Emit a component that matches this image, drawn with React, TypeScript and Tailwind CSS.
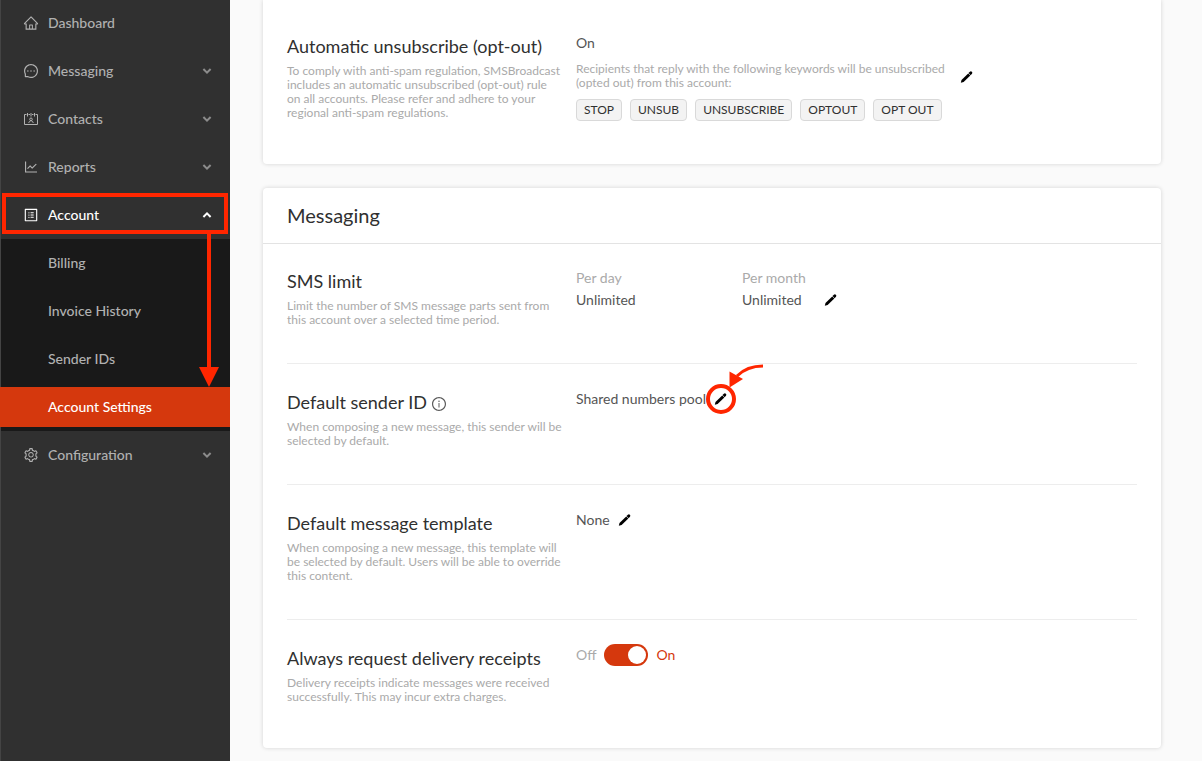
import type { ReactNode } from "react";
import {
  AiOutlineHome,
  AiOutlineInfoCircle,
  AiOutlineLineChart,
  AiOutlineMessage,
  AiOutlineProfile,
  AiOutlineSetting,
} from "react-icons/ai";

const accountPages = ["Billing", "Invoice History", "Sender IDs", "Account Settings"];
const keywords = ["STOP", "UNSUB", "UNSUBSCRIBE", "OPTOUT", "OPT OUT"];

function ContactsIcon() {
  return (
    <svg width="16" height="16" viewBox="0 0 16 16" fill="none" stroke="currentColor">
      <path d="M3.500 3.500h-2v10h13v-10h-2M5.500 3.500h1.500M9 3.500h1.500" />
      <path d="M4.500 2v3.500M8 2v3.500M11.500 2v3.500" />
      <circle cx="8" cy="8.300" r="1.300" />
      <path d="M5.800 12c.2-1.400 1-2.200 2.200-2.200s2 .8 2.200 2.200" />
    </svg>
  );
}

function Chevron(props: { up?: boolean }) {
  return (
    <svg
      className={props.up ? "ml-auto" : "ml-auto text-[#8c8c8c]"}
      width="10"
      height="8"
      viewBox="0 0 10 8"
      fill="none"
      stroke="currentColor"
      strokeWidth="2"
    >
      <path d={props.up ? "M1.4 6 5 2.400 8.600 6" : "M1.400 2 5 5.600 8.600 2"} />
    </svg>
  );
}

function MenuItem(props: { icon: ReactNode; label: string; open?: boolean; plain?: boolean; children?: ReactNode }) {
  return (
    <div className={props.open ? "relative text-white" : "relative text-[#b1b1b1]"}>
      <button type="button" className="flex h-10 w-full items-center pr-[18px] pl-[22px] text-left">
        <span className="mr-[9px] shrink-0">{props.icon}</span>
        {props.label}
        {props.plain ? null : <Chevron up={props.open} />}
      </button>
      {props.children}
    </div>
  );
}

function AccountHighlight() {
  return (
    <>
      <div className="pointer-events-none absolute -top-[2px] right-[2px] left-[1px] h-[41px] border-4 border-[#ff2600]" />
      <svg className="pointer-events-none absolute top-[39px] right-[11px]" width="20" height="153" viewBox="0 0 20 153" fill="#ff2600">
        <path d="M8 0h4v133h8l-10 20L0 133h8z" />
      </svg>
    </>
  );
}

function Sidebar() {
  return (
    <nav className="w-[230px] shrink-0 border-l border-[#444] bg-[#303030] pt-[3px] text-sm font-medium">
      <div className="flex flex-col gap-2">
        <MenuItem icon={<AiOutlineHome size={16} />} label="Dashboard" plain />
        <MenuItem icon={<AiOutlineMessage size={16} />} label="Messaging" />
        <MenuItem icon={<ContactsIcon />} label="Contacts" />
        <MenuItem icon={<AiOutlineLineChart size={16} />} label="Reports" />
        <div className="relative z-10">
          <MenuItem icon={<AiOutlineProfile size={16} />} label="Account" open>
            <AccountHighlight />
          </MenuItem>
        </div>
      </div>
      <ul className="my-1 flex flex-col gap-2 bg-[#191919] py-1 text-[#b1b1b1]">
        {accountPages.map((page) => (
          <li key={page}>
            <a
              href="#"
              className={
                page === "Account Settings"
                  ? "-ml-px flex h-10 items-center bg-[#d5380d] pl-12 text-white"
                  : "-ml-px flex h-10 items-center pl-12"
              }
            >
              {page}
            </a>
          </li>
        ))}
      </ul>
      <MenuItem icon={<AiOutlineSetting size={16} />} label="Configuration" />
    </nav>
  );
}

function EditButton(props: { label: string; className?: string; children?: ReactNode }) {
  return (
    <button type="button" aria-label={props.label} className={`relative shrink-0 text-black ${props.className ?? "ml-2"}`}>
      <svg width="14" height="14" viewBox="0 0 14 14" fill="currentColor">
        <path d="M.8 12.700 1.500 9.900 8.200 3.400 10.300 5.500 3.600 12z" />
        <path d="M8.500 3.100 9.900 1.700a1.500 1.500 0 0 1 2.100 2.100L10.600 5.200z" />
      </svg>
      {props.children}
    </button>
  );
}

function EditHighlight() {
  return (
    <svg className="pointer-events-none absolute -top-[28px] -left-[8px] max-w-none" width="60" height="52" viewBox="0 0 60 52" fill="none">
      <circle cx="15" cy="35" r="13" stroke="#ff2600" strokeWidth="4" />
      <path d="M57 2C46 2 38 5 31 12" stroke="#ff2600" strokeWidth="3" />
      <path d="M23.500 23.500V7.500L37 15z" fill="#ff2600" />
    </svg>
  );
}

function Setting(props: { title: ReactNode; text: string; children: ReactNode }) {
  return (
    <section className="grid grid-cols-[17fr_33fr] border-t border-[#ededed] pt-6 pb-9 first:border-t-0 first:pt-0">
      <div className="pr-[13px]">
        <h3 className="flex items-center text-lg leading-7 text-[#303030]">{props.title}</h3>
        <p className="mt-1 text-xs leading-[14px] text-[#aaa]">{props.text}</p>
      </div>
      <div className="text-sm leading-[22px] text-[#555]">{props.children}</div>
    </section>
  );
}

export default function App() {
  return (
    <div className="flex min-h-screen bg-[#fafafa] font-[Lato,sans-serif]">
      <Sidebar />
      <main className="min-w-0 flex-1 pr-[41px] pb-3 pl-[33px]">
        <div className="rounded-b bg-white px-6 pt-8 pb-[7px] shadow-[0_0_4px_rgba(0,0,0,0.16)]">
          <Setting
            title="Automatic unsubscribe (opt-out)"
            text="To comply with anti-spam regulation, SMSBroadcast includes an automatic unsubscribed (opt-out) rule on all accounts. Please refer and adhere to your regional anti-spam regulations."
          >
            <div className="flex items-center">
              <div className="w-[372px]">
                <div>On</div>
                <p className="mt-2 text-xs leading-[14px] text-[#aaa]">
                  Recipients that reply with the following keywords will be unsubscribed (opted out) from this account:
                </p>
                <ul className="mt-[9px] flex gap-2">
                  {keywords.map((word) => (
                    <li key={word} className="rounded border border-[#d9d9d9] bg-[#f3f3f3] px-[7px] text-xs leading-5 text-[#303030]">
                      {word}
                    </li>
                  ))}
                </ul>
              </div>
              <EditButton label="Edit opt-out keywords" className="ml-3" />
            </div>
          </Setting>
        </div>

        <div className="mt-6 rounded bg-white pb-2 shadow-[0_0_4px_rgba(0,0,0,0.16)]">
          <h2 className="border-b border-[#e3e3e3] px-6 pt-[13px] pb-[14px] text-xl leading-7 text-[#303030]">Messaging</h2>
          <div className="px-6 pt-[23px]">
            <Setting title="SMS limit" text="Limit the number of SMS message parts sent from this account over a selected time period.">
              <div className="flex items-end">
                <dl className="w-[166px]">
                  <dt className="text-[#aaa]">Per day</dt>
                  <dd>Unlimited</dd>
                </dl>
                <dl>
                  <dt className="text-[#aaa]">Per month</dt>
                  <dd>Unlimited</dd>
                </dl>
                <EditButton label="Edit SMS limit" className="mb-1 ml-[18px]" />
              </div>
            </Setting>
            <Setting
              title={
                <>
                  Default sender ID
                  <AiOutlineInfoCircle size={16} className="mt-[3px] ml-1 text-[#5a5a5a]" />
                </>
              }
              text="When composing a new message, this sender will be selected by default."
            >
              <div className="flex items-center">
                Shared numbers pool
                <EditButton label="Edit default sender ID">
                  <EditHighlight />
                </EditButton>
              </div>
            </Setting>
            <Setting
              title="Default message template"
              text="When composing a new message, this template will be selected by default. Users will be able to override this content."
            >
              <div className="flex items-center">
                None
                <EditButton label="Edit default message template" />
              </div>
            </Setting>
            <Setting
              title="Always request delivery receipts"
              text="Delivery receipts indicate messages were received successfully. This may incur extra charges."
            >
              <label className="flex items-center gap-2">
                <span className="text-[#aaa]">Off</span>
                <input
                  type="checkbox"
                  role="switch"
                  defaultChecked
                  aria-label="Always request delivery receipts"
                  className="h-[22px] w-11 appearance-none rounded-full bg-[#b1b1b1] p-[2px] before:block before:size-[18px] before:rounded-full before:bg-white checked:bg-[#d5380d] checked:before:ml-[22px]"
                />
                <span className="text-[#d5380d]">On</span>
              </label>
            </Setting>
          </div>
        </div>
      </main>
    </div>
  );
}
